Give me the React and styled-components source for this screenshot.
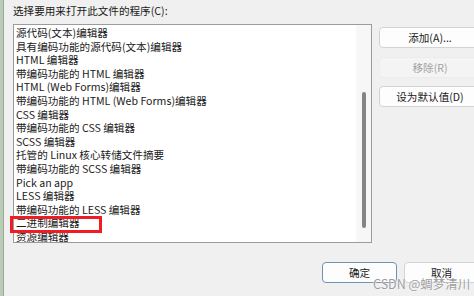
import React from 'react';
import styled, { createGlobalStyle } from 'styled-components';

const GlobalStyle = createGlobalStyle`
  html, body {
    margin: 0;
    padding: 0;
    background: #f0f0f0;
  }
  body {
    font-family: "Noto Sans CJK SC", "Noto Sans", sans-serif;
  }
`;

const Window = styled.div`
  width: 474px;
  height: 296px;
  display: flex;
  overflow: hidden;
  position: relative;
  background: #f0f0f0;
  color: #1a1a1a;
  font-size: 10.6px;
`;

const Strip = styled.div`
  width: 3px;
  flex: none;
  background: #b8ccb6;
  border-right: 1px solid #98a896;
`;

const Main = styled.div`
  flex: 1;
  padding: 3px 0 0 9px;
  display: flex;
  flex-direction: column;
`;

const Label = styled.div`
  height: 16px;
  line-height: 16px;
  white-space: nowrap;
`;

const Middle = styled.div`
  display: flex;
  gap: 7px;
  margin-top: 5px;
`;

const ListFrame = styled.div`
  position: relative;
  width: 359px;
  height: 219px;
  flex: none;
`;

const ListBox = styled.div`
  box-sizing: border-box;
  width: 100%;
  height: 100%;
  display: flex;
  background: #ffffff;
  border: 1px solid #9c9c9c;
  overflow: hidden;
`;

const Items = styled.div`
  flex: 1;
  padding: 1px 0 0 2px;
`;

const Item = styled.div`
  height: 13.6px;
  line-height: 13.6px;
  white-space: nowrap;
`;

const Track = styled.div`
  width: 15px;
  flex: none;
  background: #f7f7f7;
  padding-top: 67px;
  display: flex;
  justify-content: center;
`;

const Thumb = styled.div`
  width: 4px;
  height: 136px;
  border-radius: 2px;
  background: #858585;
`;

const Highlight = styled.div`
  position: absolute;
  left: -3px;
  top: 192px;
  width: 92px;
  height: 17px;
  box-sizing: border-box;
  border: 3px solid #f01c24;
  pointer-events: none;
`;

const SideButtons = styled.div`
  display: flex;
  flex-direction: column;
  gap: 8.5px;
  padding-top: 3px;
`;

const Button = styled.div`
  box-sizing: border-box;
  width: ${(p) => p.w || 102}px;
  height: 21px;
  flex: none;
  display: flex;
  align-items: center;
  justify-content: center;
  border-radius: 4px;
  background: ${(p) => (p.disabled ? '#f4f4f4' : '#fdfdfd')};
  border: 1px solid ${(p) => (p.primary ? '#6f93b3' : p.disabled ? '#ececec' : '#d3d3d3')};
  color: ${(p) => (p.disabled ? '#a2a2a2' : '#1a1a1a')};
  white-space: nowrap;
`;

const Bottom = styled.div`
  display: flex;
  gap: 7px;
  margin-top: 19px;
  padding-left: 309px;
`;

const Watermark = styled.div`
  position: absolute;
  left: 373px;
  top: 276px;
  font-size: 12.5px;
  line-height: 16px;
  color: #9c9c9c;
  white-space: nowrap;
  text-shadow: 0 0 2px #ffffff, 0 0 1px #ffffff;
  pointer-events: none;
`;

const programs = [
  '源代码(文本)编辑器',
  '具有编码功能的源代码(文本)编辑器',
  'HTML 编辑器',
  '带编码功能的 HTML 编辑器',
  'HTML (Web Forms)编辑器',
  '带编码功能的 HTML (Web Forms)编辑器',
  'CSS 编辑器',
  '带编码功能的 CSS 编辑器',
  'SCSS 编辑器',
  '托管的 Linux 核心转储文件摘要',
  '带编码功能的 SCSS 编辑器',
  'Pick an app',
  'LESS 编辑器',
  '带编码功能的 LESS 编辑器',
  '二进制编辑器',
  '资源编辑器',
];

export default function App() {
  return (
    <>
      <GlobalStyle />
      <Window>
        <Strip />
        <Main>
          <Label>选择要用来打开此文件的程序(C):</Label>
          <Middle>
            <ListFrame>
              <ListBox>
                <Items>
                  {programs.map((name) => (
                    <Item key={name}>{name}</Item>
                  ))}
                </Items>
                <Track>
                  <Thumb />
                </Track>
              </ListBox>
              <Highlight />
            </ListFrame>
            <SideButtons>
              <Button>添加(A)...</Button>
              <Button disabled>移除(R)</Button>
              <Button>设为默认值(D)</Button>
            </SideButtons>
          </Middle>
          <Bottom>
            <Button w={75} primary>确定</Button>
            <Button w={75}>取消</Button>
          </Bottom>
        </Main>
        <Watermark>CSDN @蜩梦清川</Watermark>
      </Window>
    </>
  );
}
